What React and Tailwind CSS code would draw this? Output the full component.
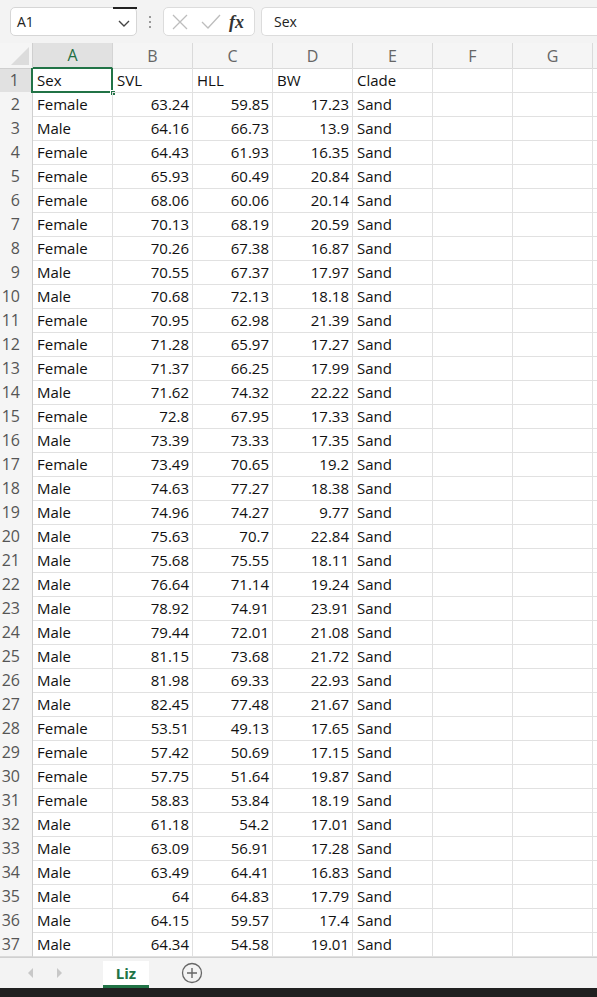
import React from "react";

const rows = [
  ["Sex", "SVL", "HLL", "BW", "Clade"],
  ["Female", "63.24", "59.85", "17.23", "Sand"],
  ["Male", "64.16", "66.73", "13.9", "Sand"],
  ["Female", "64.43", "61.93", "16.35", "Sand"],
  ["Female", "65.93", "60.49", "20.84", "Sand"],
  ["Female", "68.06", "60.06", "20.14", "Sand"],
  ["Female", "70.13", "68.19", "20.59", "Sand"],
  ["Female", "70.26", "67.38", "16.87", "Sand"],
  ["Male", "70.55", "67.37", "17.97", "Sand"],
  ["Male", "70.68", "72.13", "18.18", "Sand"],
  ["Female", "70.95", "62.98", "21.39", "Sand"],
  ["Female", "71.28", "65.97", "17.27", "Sand"],
  ["Female", "71.37", "66.25", "17.99", "Sand"],
  ["Male", "71.62", "74.32", "22.22", "Sand"],
  ["Female", "72.8", "67.95", "17.33", "Sand"],
  ["Male", "73.39", "73.33", "17.35", "Sand"],
  ["Female", "73.49", "70.65", "19.2", "Sand"],
  ["Male", "74.63", "77.27", "18.38", "Sand"],
  ["Male", "74.96", "74.27", "9.77", "Sand"],
  ["Male", "75.63", "70.7", "22.84", "Sand"],
  ["Male", "75.68", "75.55", "18.11", "Sand"],
  ["Male", "76.64", "71.14", "19.24", "Sand"],
  ["Male", "78.92", "74.91", "23.91", "Sand"],
  ["Male", "79.44", "72.01", "21.08", "Sand"],
  ["Male", "81.15", "73.68", "21.72", "Sand"],
  ["Male", "81.98", "69.33", "22.93", "Sand"],
  ["Male", "82.45", "77.48", "21.67", "Sand"],
  ["Female", "53.51", "49.13", "17.65", "Sand"],
  ["Female", "57.42", "50.69", "17.15", "Sand"],
  ["Female", "57.75", "51.64", "19.87", "Sand"],
  ["Female", "58.83", "53.84", "18.19", "Sand"],
  ["Male", "61.18", "54.2", "17.01", "Sand"],
  ["Male", "63.09", "56.91", "17.28", "Sand"],
  ["Male", "63.49", "64.41", "16.83", "Sand"],
  ["Male", "64", "64.83", "17.79", "Sand"],
  ["Male", "64.15", "59.57", "17.4", "Sand"],
  ["Male", "64.34", "54.58", "19.01", "Sand"],
];

const cols = ["A", "B", "C", "D", "E", "F", "G"];
const gridCols = "grid grid-cols-[33px_80px_80px_80px_80px_80px_80px_80px_1fr]";

function Toolbar() {
  return (
    <div className="h-[43px] bg-[#f3f3f3] flex items-start pt-[7px] pl-[10px]">
      <div className="relative w-[127px] h-[29px] bg-white border border-[#d6d6d6] rounded-[5px] flex items-center justify-between pl-[6px] pr-[5px]">
        <span className="text-[14px] text-[#222]">A1</span>
        <svg width="14" height="10" viewBox="0 0 14 10" className="mt-[2px]">
          <path d="M2 3 L7 8 L12 3" stroke="#444" strokeWidth="1.4" fill="none" />
        </svg>
        <div className="absolute top-[-1px] right-[-1px] w-[24px] h-[2px] bg-[#222]" />
      </div>
      <div className="w-[26px] h-[29px] flex flex-col items-center justify-center gap-[3px]">
        <div className="w-[2px] h-[2px] bg-[#999]" />
        <div className="w-[2px] h-[2px] bg-[#999]" />
        <div className="w-[2px] h-[2px] bg-[#999]" />
      </div>
      <div className="w-[92px] h-[29px] bg-white border border-[#dcdcdc] rounded-[5px] flex items-center pl-[7px]">
        <svg width="18" height="18" viewBox="0 0 18 18">
          <path d="M2 2 L16 16 M16 2 L2 16" stroke="#bdbdbd" strokeWidth="1.3" />
        </svg>
        <svg width="20" height="18" viewBox="0 0 20 18" className="ml-[12px]">
          <path d="M1 9 L7 15 L19 2" stroke="#bdbdbd" strokeWidth="1.3" fill="none" />
        </svg>
        <span className="ml-[8px] text-[18px] italic font-bold text-[#333] leading-none" style={{ fontFamily: '"Liberation Serif", serif' }}>
          fx
        </span>
      </div>
      <div className="ml-[6px] flex-1 h-[29px] bg-white border border-[#dcdcdc] border-r-0 rounded-l-[5px] flex items-center pl-[12px]">
        <span className="text-[14px] text-[#222]">Sex</span>
      </div>
    </div>
  );
}

function HeaderRow() {
  return (
    <div className={`${gridCols} h-[25px] bg-[#f5f5f5]`}>
      <div className="relative border-r border-b border-[#cfcfcf]">
        <svg className="absolute right-[3px] bottom-[3px]" width="18" height="18" viewBox="0 0 18 18">
          <path d="M18 0 L18 18 L0 18 Z" fill="#dcdcdc" />
        </svg>
      </div>
      {cols.map((c, i) => (
        <div
          key={c}
          className={
            i === 0
              ? "bg-[#e1e1e1] border-r border-[#d4d4d4] border-b-2 border-b-[#217346] flex items-center justify-center text-[16px] text-[#1e6e42]"
              : "border-r border-b border-[#dadada] flex items-center justify-center text-[16px] text-[#666]"
          }
        >
          {c}
        </div>
      ))}
      <div className="border-b border-[#dadada]" />
    </div>
  );
}

function DataRow({ n, cells }) {
  const first = n === 1;
  return (
    <div className={`${gridCols} h-[24px]`}>
      <div
        className={`${first ? "bg-[#e1e1e1] border-r-2 border-r-[#217346]" : "bg-[#f5f5f5] border-r border-r-[#cfcfcf]"} border-b border-b-[#dadada] flex items-center justify-end pr-[12px] text-[16px] text-[#555]`}
      >
        {n}
      </div>
      {cols.map((c, i) => {
        const v = cells[i] ?? "";
        const numeric = v !== "" && !isNaN(Number(v));
        return (
          <div
            key={c}
            className={`relative border-r border-b border-[#e1e1e1] flex items-center text-[15px] text-[#111] whitespace-nowrap ${numeric ? "justify-end pr-[3px]" : "pl-[4px]"}`}
          >
            {v}
            {first && i === 0 && (
              <>
                <div className="absolute left-[-2px] top-[-2px] right-[-1px] bottom-[-1px] border-2 border-[#217346] pointer-events-none" />
                <div className="absolute right-[-4px] bottom-[-4px] w-[6px] h-[6px] bg-[#217346] border border-white" />
              </>
            )}
          </div>
        );
      })}
      <div className="border-b border-[#e1e1e1]" />
    </div>
  );
}

function TabBar() {
  return (
    <div className="h-[31px] bg-[#f3f3f3] border-t border-[#d0d0d0] flex items-stretch">
      <div className="w-[103px] flex items-center pl-[27px] gap-[22px]">
        <svg width="7" height="10" viewBox="0 0 7 10">
          <path d="M6 0 L1 5 L6 10 Z" fill="#c8c8c8" />
        </svg>
        <svg width="7" height="10" viewBox="0 0 7 10">
          <path d="M1 0 L6 5 L1 10 Z" fill="#c8c8c8" />
        </svg>
      </div>
      <div className="mt-[3px] w-[46px] bg-white border-b-[3px] border-[#217346] flex items-center justify-center">
        <span className="text-[15px] font-bold text-[#217346]">Liz</span>
      </div>
      <div className="ml-[32px] flex items-center">
        <svg width="22" height="22" viewBox="0 0 22 22">
          <circle cx="11" cy="11" r="9.5" stroke="#666" strokeWidth="1.3" fill="none" />
          <path d="M11 6 V16 M6 11 H16" stroke="#666" strokeWidth="1.4" />
        </svg>
      </div>
    </div>
  );
}

export default function App() {
  return (
    <div className="w-[597px] h-[997px] overflow-hidden flex flex-col bg-white" style={{ fontFamily: '"Open Sans", "Noto Sans", sans-serif' }}>
      <Toolbar />
      <HeaderRow />
      <div className="flex-1 overflow-hidden">
        {rows.map((r, i) => (
          <DataRow key={i} n={i + 1} cells={r} />
        ))}
      </div>
      <TabBar />
      <div className="h-[9px] bg-[#202020]" />
    </div>
  );
}
